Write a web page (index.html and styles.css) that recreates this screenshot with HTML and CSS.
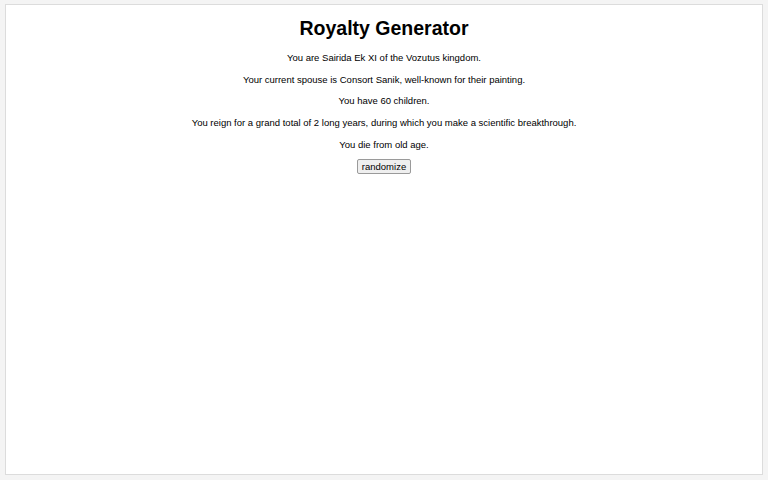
FILE: index.html
```html
<!DOCTYPE html>
<html lang="en">
  <head>
    <meta charset="UTF-8" />
    <meta name="viewport" content="width=device-width, initial-scale=1.0" />
    <title>Royalty Generator</title>
    <link rel="stylesheet" href="styles.css">
  </head>
  <body>
    <div class="container">
      <h1>Royalty Generator</h1>
      <div id="story">
        <p>You are Sairida Ek XI of the Vozutus kingdom.</p>
        <p>Your current spouse is Consort Sanik, well-known for their painting.</p>
        <p>You have 60 children.</p>
        <p>You reign for a grand total of 2 long years, during which you make a scientific breakthrough.</p>
        <p>You die from old age.</p>
      </div>
      <button id="randomize" type="button">randomize</button>
    </div>
  </body>
</html>
```

FILE: styles.css
```css
body {
  font-family: "Liberation Sans", Arial, sans-serif;
  font-size: 9.5px;
  margin: 0;
  padding: 4px 5px;
  background-color: #f4f4f4;
  color: #000;
}

.container {
  background-color: #fff;
  border: 1px solid #dcdcdc;
  height: 471px;
  box-sizing: border-box;
  text-align: center;
  padding: 0 10px;
}

h1 {
  font-size: 19.5px;
  line-height: 23px;
  margin: 12px 0;
}

p {
  line-height: 11px;
  margin: 10.7px 0;
}

#story {
  margin-bottom: -1px;
}

button {
  font-family: "Liberation Sans", Arial, sans-serif;
  font-size: 9.5px;
  line-height: 11px;
  padding: 1px 4px;
  background-color: #efefef;
  border: 1px solid #9a9a9a;
  border-radius: 2px;
  color: #000;
}
```
